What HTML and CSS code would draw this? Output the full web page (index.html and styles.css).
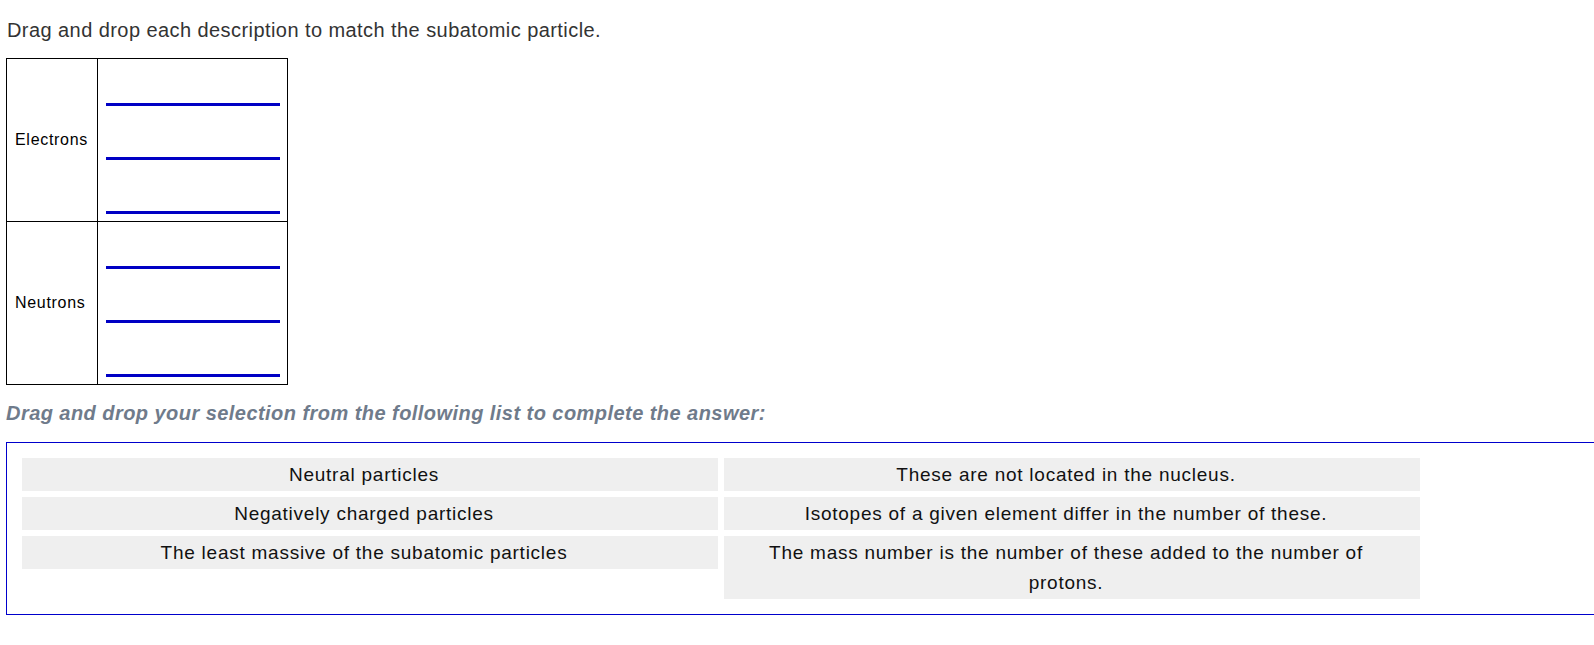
FILE: index.html
```html
<!DOCTYPE html>
<html lang="en">
<head>
<meta charset="utf-8">
<title>Subatomic particles</title>
<link rel="stylesheet" href="styles.css">
</head>
<body>
<div class="page">
  <p class="prompt">Drag and drop each description to match the subatomic particle.</p>
  <table class="match">
    <tr>
      <th class="label">Electrons</th>
      <td class="drops"><div class="drop"></div><div class="drop"></div><div class="drop"></div></td>
    </tr>
    <tr>
      <th class="label">Neutrons</th>
      <td class="drops"><div class="drop"></div><div class="drop"></div><div class="drop"></div></td>
    </tr>
  </table>
  <p class="instr">Drag and drop your selection from the following list to complete the answer:</p>
  <div class="bank">
    <div class="col">
      <div class="item">Neutral particles</div>
      <div class="item">Negatively charged particles</div>
      <div class="item">The least massive of the subatomic particles</div>
    </div>
    <div class="col">
      <div class="item">These are not located in the nucleus.</div>
      <div class="item">Isotopes of a given element differ in the number of these.</div>
      <div class="item">The mass number is the number of these added to the number of protons.</div>
    </div>
  </div>
</div>
</body>
</html>
```
FILE: styles.css
```css
html, body {
  margin: 0;
  padding: 0;
  background: #fff;
}

.page {
  padding: 19px 0 0 6px;
  font-family: "Liberation Sans", Arial, sans-serif;
  overflow: hidden;
  height: 626px;
}

.prompt {
  margin: 0 0 0 1px;
  font-size: 20px;
  line-height: 23px;
  letter-spacing: 0.43px;
  color: #333;
}

.match {
  margin-top: 16px;
  border-collapse: separate;
  border-spacing: 0;
  border: 1px solid #000;
}

.match tr:first-child > * {
  border-bottom: 1px solid #000;
}

.label {
  width: 74px;
  padding: 0 8px;
  border-right: 1px solid #000;
  font-weight: normal;
  text-align: left;
  vertical-align: middle;
  font-size: 16px;
  letter-spacing: 0.7px;
  color: #000;
}

.drops {
  width: 174px;
  padding: 0 7px 0 8px;
  vertical-align: top;
}

.drop {
  height: 44px;
  border-bottom: 3px solid #0000c4;
  margin-bottom: 7px;
}

.instr {
  margin: 17px 0 0 0;
  font-size: 20px;
  line-height: 23px;
  font-weight: bold;
  font-style: italic;
  letter-spacing: 0.45px;
  color: #6f7b8b;
}

.bank {
  margin-top: 17px;
  margin-right: -40px;
  border: 1px solid #0000cc;
  padding: 15px;
  display: flex;
  gap: 6px;
  align-items: flex-start;
}

.col {
  width: 696px;
  display: flex;
  flex-direction: column;
  gap: 6px;
}

.item {
  background: #efefef;
  text-align: center;
  font-size: 19px;
  line-height: 30px;
  padding: 1.5px 22px 1.5px 10px;
  letter-spacing: 0.75px;
  color: #111;
}
```
